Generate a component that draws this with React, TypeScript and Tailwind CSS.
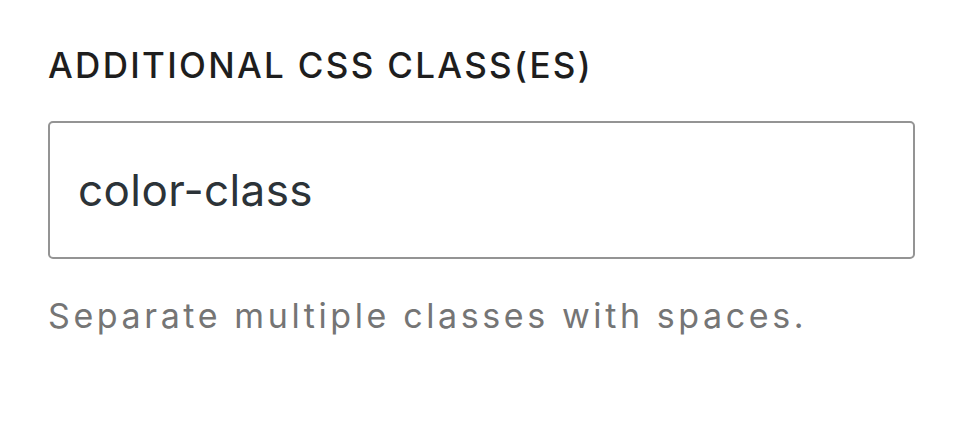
import React from 'react';

export default function App() {
  return (
    <div
      className="min-h-screen w-full bg-white px-[48px] pt-[45px]"
      style={{ fontFamily: 'Inter, "Noto Sans", sans-serif' }}
    >
      <label
        htmlFor="additional-css"
        className="block text-[35px] leading-[40px] font-medium uppercase tracking-[2.3px] text-[#1e1e1e]"
      >
        Additional CSS class(es)
      </label>
      <input
        id="additional-css"
        type="text"
        defaultValue="color-class"
        className="mt-[36px] box-border block h-[138px] w-[867px] rounded-[5px] border-2 border-[#949494] bg-white pl-[28px] text-[44px] tracking-[0.4px] text-[#2c3338] outline-none"
      />
      <p className="mt-[37px] text-[34px] leading-[40px] tracking-[3.6px] text-[#757575]">
        Separate multiple classes with spaces.
      </p>
    </div>
  );
}
